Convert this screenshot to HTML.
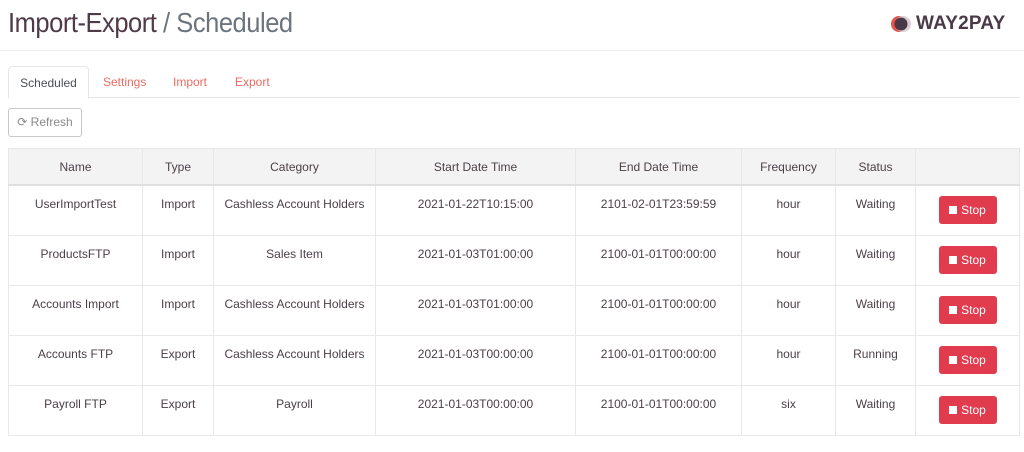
<!DOCTYPE html>
<html><head><style>
body{margin:0;background:#fff;font-family:"Liberation Sans",sans-serif;color:#4a3f47;width:1024px;height:452px;overflow:hidden;position:relative}
.title{position:absolute;left:8px;top:7px;font-size:28px;color:#4f3a48;letter-spacing:-0.5px;transform:scaleX(0.91);transform-origin:0 0;white-space:nowrap}
.title span{color:#6c757d}
.hr{position:absolute;left:0;right:0;top:50px;border-top:1px solid #f0eeee}
.logo{position:absolute;left:890px;top:13px;display:flex;align-items:center}
.logo b{font-size:19px;color:#4a3a48;font-weight:900;letter-spacing:0.2px;margin-left:4px}
.tabs{position:absolute;left:8px;right:4px;top:66px;height:31px;border-bottom:1px solid #e6e6e6}
.tab{position:absolute;top:1px;height:31px;line-height:31px;font-size:12px;color:#ec6b62}
.tab.a{top:0;left:0;width:79px;border:1px solid #e6e6e6;border-bottom:1px solid #fff;border-radius:4px 4px 0 0;color:#4a4f57;text-align:center;background:#fff;height:31px;line-height:33px}
.btn{position:absolute;left:8px;top:108px;width:72px;height:27px;border:1px solid #c8c8c8;border-radius:3px;font-size:12px;color:#8a8a8a;line-height:27px;text-align:center}
table{position:absolute;left:8px;top:148px;width:1012px;border-collapse:collapse;font-size:12px}
td,th{border:1px solid #e8e8e8;text-align:center;font-weight:normal;padding:0}
th{background:#f3f3f3;height:35px;color:#4a3f47;border-bottom:2px solid #e0e0e0}
td{height:50px;vertical-align:top;padding-top:11px;box-sizing:border-box}
.stop{display:inline-block;background:#e03c4e;color:#fff;border-radius:3px;width:58px;height:28px;line-height:28px;margin-top:-1px;font-size:12px}
.stop i{display:inline-block;width:8px;height:8px;background:#fff;margin-right:4px;vertical-align:-0px}
</style></head><body>
<div class="title">Import-Export <span>/ Scheduled</span></div>
<div class="logo"><svg width="22" height="18"><circle cx="9" cy="9" r="8" fill="#e8524a"/><circle cx="13" cy="9" r="8" fill="#d8d0d4"/><circle cx="11" cy="9" r="6.5" fill="#4a3a48"/></svg><b>WAY2PAY</b></div>
<div class="hr"></div>
<div class="tabs"><div class="tab a">Scheduled</div><div class="tab" style="left:95px">Settings</div><div class="tab" style="left:165px">Import</div><div class="tab" style="left:227px">Export</div></div>
<div class="btn">⟳ Refresh</div>
<table>
<colgroup><col style="width:134px"><col style="width:71px"><col style="width:162px"><col style="width:200px"><col style="width:166px"><col style="width:94px"><col style="width:80px"><col></colgroup>
<tr><th>Name</th><th>Type</th><th>Category</th><th>Start Date Time</th><th>End Date Time</th><th>Frequency</th><th>Status</th><th></th></tr>
<tr><td>UserImportTest</td><td>Import</td><td>Cashless Account Holders</td><td>2021-01-22T10:15:00</td><td>2101-02-01T23:59:59</td><td>hour</td><td>Waiting</td><td><span class="stop"><i></i>Stop</span></td></tr>
<tr><td>ProductsFTP</td><td>Import</td><td>Sales Item</td><td>2021-01-03T01:00:00</td><td>2100-01-01T00:00:00</td><td>hour</td><td>Waiting</td><td><span class="stop"><i></i>Stop</span></td></tr>
<tr><td>Accounts Import</td><td>Import</td><td>Cashless Account Holders</td><td>2021-01-03T01:00:00</td><td>2100-01-01T00:00:00</td><td>hour</td><td>Waiting</td><td><span class="stop"><i></i>Stop</span></td></tr>
<tr><td>Accounts FTP</td><td>Export</td><td>Cashless Account Holders</td><td>2021-01-03T00:00:00</td><td>2100-01-01T00:00:00</td><td>hour</td><td>Running</td><td><span class="stop"><i></i>Stop</span></td></tr>
<tr><td>Payroll FTP</td><td>Export</td><td>Payroll</td><td>2021-01-03T00:00:00</td><td>2100-01-01T00:00:00</td><td>six</td><td>Waiting</td><td><span class="stop"><i></i>Stop</span></td></tr>
</table>
</body></html>
